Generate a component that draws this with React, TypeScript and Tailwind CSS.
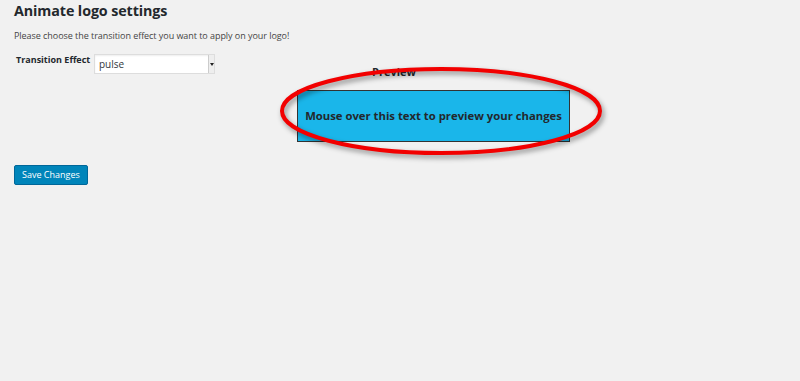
export default function App() {
  return (
    <div
      className="relative h-[381px] w-[800px] overflow-hidden bg-[#f1f1f1] pl-[14px] pt-[3px] text-[#23282d]"
      style={{ fontFamily: '"Open Sans", "DejaVu Sans", sans-serif' }}
    >
      {/* Heading */}
      <h1 className="text-[14.3px] font-bold leading-[16px] tracking-[-0.1px]">Animate logo settings</h1>
      <p className="mt-[11px] text-[9px] leading-[12px] tracking-[-0.05px] text-[#444]">
        Please choose the transition effect you want to apply on your logo!
      </p>

      {/* Settings row */}
      <div className="mt-[12px] flex items-start">
        <label className="ml-[2px] mt-[0px] w-[78px] text-[9px] font-bold leading-[12px]">Transition Effect</label>
        <div className="relative flex h-[20px] w-[121px] items-center border border-[#ddd] bg-white pl-[4px] text-[10px] text-[#32373c] shadow-[inset_0_1px_2px_rgba(0,0,0,0.07)]">
          pulse
          <div className="absolute right-0 top-0 flex h-[18px] w-[6px] items-center justify-center border-l border-[#ccc] bg-[#eee]">
            <div className="h-0 w-0 border-l-[2px] border-r-[2px] border-t-[3px] border-l-transparent border-r-transparent border-t-[#222]" />
          </div>
        </div>
      </div>

      {/* Preview */}
      <div className="ml-[283px] -mt-[9px]">
        <h2 className="pl-[75px] text-[11px] font-bold leading-[14px]">Preview</h2>
        <div className="mt-[11px] flex h-[52px] w-[273px] items-center justify-center border border-[#333] bg-[#1ab6ea] text-[11.3px] font-bold text-[#23282d]">
          Mouse over this text to preview your changes
        </div>
      </div>

      {/* Save */}
      <button className="mt-[23px] h-[20px] rounded-[2px] border border-[#006799] bg-[#0085ba] px-[7px] text-[9px] leading-[18px] text-white">
        Save Changes
      </button>

      {/* Annotation ellipse */}
      <svg className="pointer-events-none absolute left-0 top-0" width="800" height="381">
        <defs>
          <filter id="sh" x="-20%" y="-40%" width="140%" height="180%">
            <feGaussianBlur stdDeviation="2.5" />
          </filter>
        </defs>
        <ellipse cx="443" cy="114" rx="159" ry="42" fill="none" stroke="rgba(0,0,0,0.35)" strokeWidth="5" filter="url(#sh)" />
        <ellipse cx="441" cy="111" rx="159" ry="42" fill="none" stroke="#f20000" strokeWidth="4" />
      </svg>
    </div>
  )
}
